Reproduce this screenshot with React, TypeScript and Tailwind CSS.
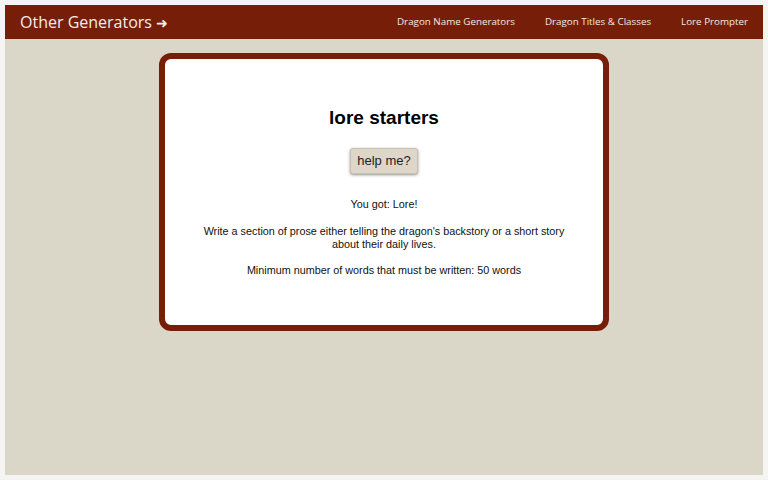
export default function App() {
  const links = ["Dragon Name Generators", "Dragon Titles & Classes", "Lore Prompter"];

  return (
    <div className="h-screen bg-[#f4f4f3] p-[5px]">
      <div className="flex h-full flex-col bg-[#dad6c8]">
        {/* Top bar */}
        <header
          className="flex h-[34px] shrink-0 items-center justify-between bg-[#771e08] pl-[15px] pr-[15px] text-white"
          style={{ fontFamily: '"Open Sans", sans-serif' }}
        >
          <a className="text-[16px] leading-none text-[#f3ece8]">
            Other Generators <span className="text-[14px]">➜</span>
          </a>
          <nav className="flex items-center gap-[30px] text-[9.8px] text-[#f1e9e4]">
            {links.map((l) => (
              <a key={l}>{l}</a>
            ))}
          </nav>
        </header>

        {/* Main card */}
        <main className="flex justify-center pt-[14px]">
          <div
            className="w-[450px] rounded-[12px] border-[6px] border-[#771e08] bg-white px-[30px] pt-[48px] pb-[48px] text-center text-[#111]"
            style={{ fontFamily: '"Liberation Sans", Arial, sans-serif' }}
          >
            <h3 className="text-[19px] font-bold leading-[22px] text-black">lore starters</h3>
            <button className="mt-[19px] h-[26px] rounded-[3px] border border-[#c9c2b3] bg-[#ddd6c9] px-[6px] text-[13px] text-[#222] shadow-[0_1px_3px_rgba(0,0,0,0.45)]">
              help me?
            </button>
            <p className="mt-[24px] text-[10.8px] leading-[13px]">You got: Lore!</p>
            <p className="mx-auto mt-[14px] w-[370px] text-[10.8px] leading-[13px]">
              Write a section of prose either telling the dragon's backstory or a short story about their daily lives.
            </p>
            <p className="mt-[13px] text-[10.8px] leading-[13px]">
              Minimum number of words that must be written: 50 words
            </p>
          </div>
        </main>
      </div>
    </div>
  );
}
